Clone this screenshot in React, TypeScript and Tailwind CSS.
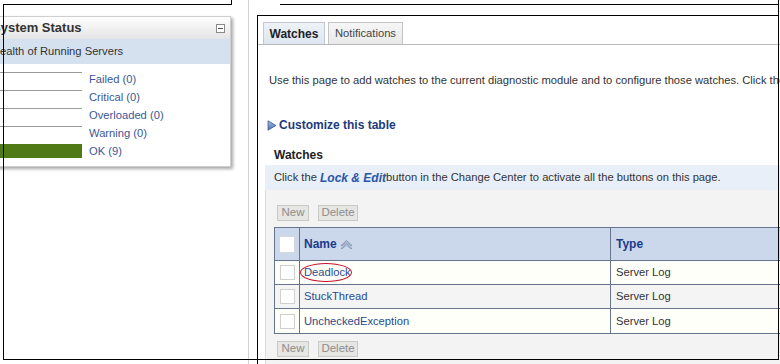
import React from "react"

const font = "font-['Liberation_Sans',Arial,sans-serif]"

const statusRows = [
  { label: "Failed (0)", fill: false },
  { label: "Critical (0)", fill: false },
  { label: "Overloaded (0)", fill: false },
  { label: "Warning (0)", fill: false },
  { label: "OK (9)", fill: true },
]

const watches = [
  { name: "Deadlock", type: "Server Log", bg: "bg-[#fffffa]" },
  { name: "StuckThread", type: "Server Log", bg: "bg-[#f4f4f4]" },
  { name: "UncheckedException", type: "Server Log", bg: "bg-[#fffffa]" },
]

function Buttons() {
  return (
    <div className="flex gap-[9px] pl-[11px]">
      <span className="h-[16px] w-[32px] flex items-center justify-center bg-[#e6e6e4] border border-[#c9c9c6] text-[11.5px] leading-none text-[#8d8d8d]">
        New
      </span>
      <span className="h-[16px] w-[40px] flex items-center justify-center bg-[#e6e6e4] border border-[#c9c9c6] text-[11.5px] leading-none text-[#8d8d8d]">
        Delete
      </span>
    </div>
  )
}

function SortIcon() {
  return (
    <svg width="13" height="10" viewBox="0 0 13 10" className="ml-[3px]">
      <path d="M1 6.5 L6.5 1.5 L12 6.5 L10.5 6.5 L6.5 3 L2.5 6.5 Z" fill="#dfe6f2" stroke="#7d8db0" strokeWidth="0.9" />
      <path d="M1 9.5 L6.5 4.5 L12 9.5 L10.5 9.5 L6.5 6 L2.5 9.5 Z" fill="#dfe6f2" stroke="#7d8db0" strokeWidth="0.9" />
    </svg>
  )
}

export default function App() {
  return (
    <div className={`relative w-[780px] h-[364px] overflow-hidden bg-white text-[#333] ${font}`}>
      <div className="flex h-full">
        {/* left column */}
        <div className="w-[249px] shrink-0 border-r border-[#d2d2d2]">
          <div className="mt-[16px] ml-[-12px] w-[243px] border border-[#cfcfcf] bg-white shadow-[2px_2px_3px_rgba(0,0,0,0.35)]">
            <div className="h-[22px] flex items-center justify-between pl-[3px] pr-[5px] bg-gradient-to-b from-[#ffffff] to-[#e4e4e4]">
              <span className="text-[13px] font-bold text-[#333]">System Status</span>
              <span className="w-[9px] h-[9px] border border-[#8a8a8a] bg-white flex items-center justify-center">
                <span className="w-[5px] h-px bg-[#555]" />
              </span>
            </div>
            <div className="h-[25px] flex items-center pl-[3px] bg-[#d6e1f0] text-[11.2px] text-[#333]">
              Health of Running Servers
            </div>
            <div className="pt-[8px] pb-[8px] flex flex-col gap-[4px]">
              {statusRows.map((r) => (
                <div key={r.label} className="flex items-center h-[14px]">
                  <div
                    className={
                      r.fill
                        ? "w-[93px] h-[14px] bg-[#4f7a16]"
                        : "w-[93px] h-[14px] border-t border-[#9a9a9a]"
                    }
                  />
                  <span className="ml-[7px] text-[11.2px] text-[#3a5796]">{r.label}</span>
                </div>
              ))}
            </div>
          </div>
        </div>

        {/* right column */}
        <div className="flex-1 pl-[8px] pt-[22px]">
          <div className="flex gap-[3px] pl-[6px]">
            <div className="h-[22px] w-[62px] flex items-center justify-center border border-b-0 border-[#c3c8cf] bg-gradient-to-b from-[#eef2f7] to-[#dde6f1] text-[12px] font-bold text-[#222]">
              Watches
            </div>
            <div className="h-[22px] w-[75px] flex items-center justify-center border border-b-0 border-[#c3c3c3] bg-gradient-to-b from-[#f6f6f6] to-[#e9e9e9] text-[11.2px] text-[#444]">
              Notifications
            </div>
          </div>
          <div className="border-t border-l border-[#b9b9b9] h-full">
            <p className="mt-[27px] pl-[11px] h-[16px] leading-[16px] text-[11.2px] whitespace-nowrap text-[#333]">
              Use this page to add watches to the current diagnostic module and to configure those watches. Click the
              Add button to create a new watch.
            </p>
            <div className="mt-[29px] pl-[9px] h-[16px] flex items-center">
              <svg width="10" height="11" viewBox="0 0 10 11">
                <defs>
                  <linearGradient id="tri" x1="0" y1="0" x2="0" y2="1">
                    <stop offset="0" stopColor="#a9bde0" />
                    <stop offset="1" stopColor="#4b6cb0" />
                  </linearGradient>
                </defs>
                <path d="M1 0.8 L9 5.5 L1 10.2 Z" fill="url(#tri)" stroke="#4866a6" strokeWidth="0.9" />
              </svg>
              <span className="ml-[2px] text-[12px] font-bold text-[#1d3b7c]">Customize this table</span>
            </div>
            <div className="mt-[14px] pl-[16px] h-[16px] leading-[16px] text-[12px] font-bold text-[#222]">Watches</div>

            <div className="ml-[7px] mt-[2px]">
              <div className="h-[25px] flex items-center pl-[9px] bg-[#e9eff8] text-[11.2px] whitespace-nowrap text-[#333]">
                Click the&nbsp;
                <span className="text-[12px] font-bold italic text-[#2a56a6]">Lock &amp; Edit</span>
                button in the Change Center to activate all the buttons on this page.
              </div>
              <div className="bg-[#f3f3f3] border-l border-[#dcdcdc] pt-[15px] pb-[20px]">
                <Buttons />
                <div className="mt-[6px] ml-[8px] w-[560px] border border-[#66758c] text-[11.2px]">
                  <div className="flex h-[33px] bg-[#cbd8ec] border-b border-[#66758c]">
                    <div className="w-[25px] border-r border-[#66758c] flex items-center justify-center">
                      <span className="w-[16px] h-[17px] bg-white border border-[#d4d8e0]" />
                    </div>
                    <div className="w-[311px] border-r border-[#66758c] flex items-center pl-[4px] text-[12px] font-bold text-[#1d3b8a]">
                      Name
                      <SortIcon />
                    </div>
                    <div className="flex-1 flex items-center pl-[5px] text-[12px] font-bold text-[#1d3b8a]">Type</div>
                  </div>
                  {watches.map((w, i) => (
                    <div
                      key={w.name}
                      className={`flex h-[24px] ${w.bg} ${i < watches.length - 1 ? "border-b border-[#66758c]" : ""}`}
                    >
                      <div className="w-[25px] border-r border-[#66758c] flex items-center justify-center">
                        <span className="w-[15px] h-[15px] bg-white border border-[#cfcfcf]" />
                      </div>
                      <div className="w-[311px] border-r border-[#66758c] flex items-center pl-[4px] text-[#2b4b8e]">
                        {w.name}
                      </div>
                      <div className="flex-1 flex items-center pl-[5px] text-[#333]">{w.type}</div>
                    </div>
                  ))}
                </div>
                <div className="mt-[7px]">
                  <Buttons />
                </div>
              </div>
            </div>
          </div>
        </div>
      </div>

      {/* red annotation ellipse */}
      <div className="absolute left-[300px] top-[263px] w-[52px] h-[19px] rounded-[50%] border border-[#c8102e]" />

      {/* black annotation frames */}
      <div className="absolute left-[3px] top-[4px] w-[229px] h-px bg-black" />
      <div className="absolute left-[231px] top-0 w-px h-[5px] bg-black" />
      <div className="absolute left-[3px] top-[4px] w-px h-[356px] bg-black" />
      <div className="absolute left-[3px] top-[359px] w-[776px] h-px bg-black" />
      <div className="absolute left-[280px] top-[4px] w-[499px] h-px bg-black" />
      <div className="absolute left-[778px] top-0 w-px h-[360px] bg-black" />
      <div className="absolute left-[257px] top-[15px] w-[522px] h-px bg-black" />
      <div className="absolute left-[257px] top-[15px] w-px h-[349px] bg-black" />
    </div>
  )
}
